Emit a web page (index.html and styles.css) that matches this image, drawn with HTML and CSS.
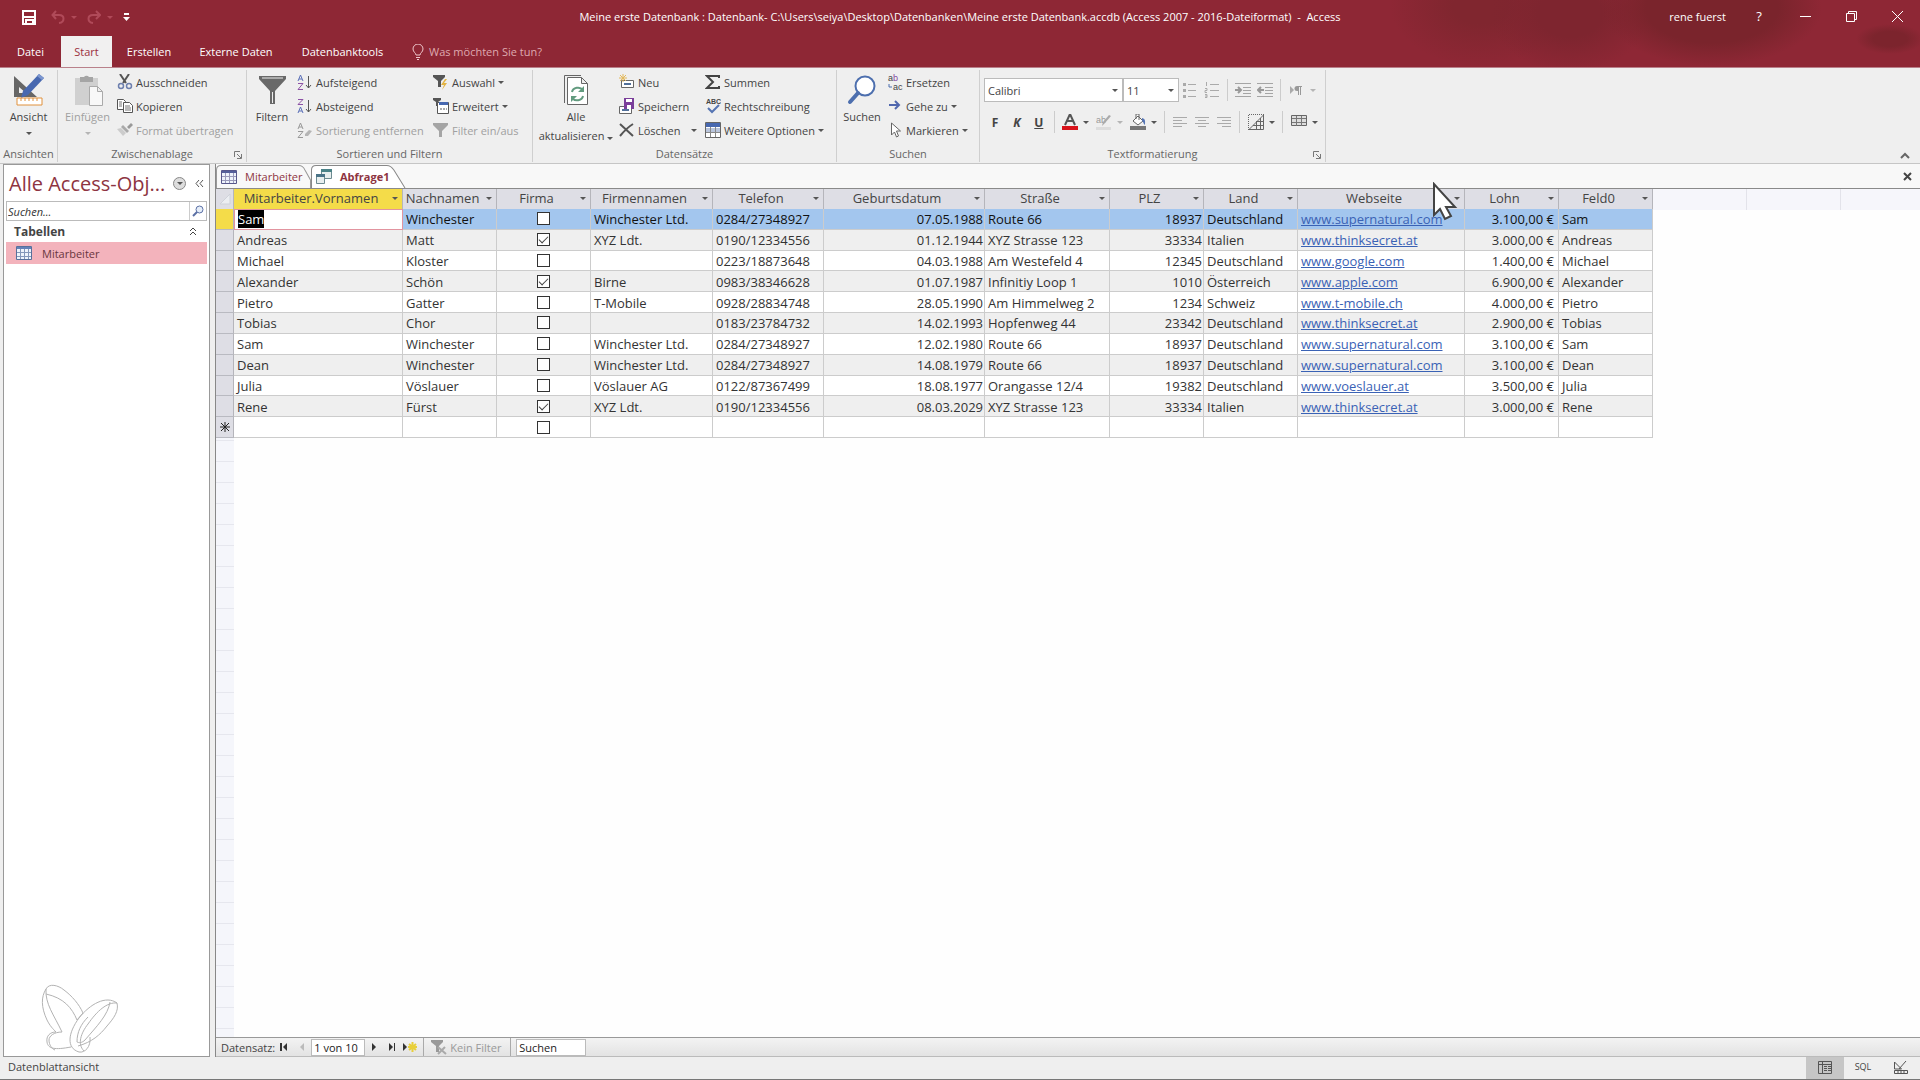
FILE: index.html
```html
<!DOCTYPE html>
<html lang="de">
<head>
  <meta charset="UTF-8" />
  <meta name="viewport" content="width=device-width, initial-scale=1.0" />
  <title>Meine erste Datenbank - Access</title>
  <link rel="stylesheet" href="styles.css">
</head>
<body>
  <div class="app">
    <header class="top">
      <div class="titlebar">
        <div class="quick">
          <button class="quick-btn save" aria-label="Speichern"><svg width="14" height="15" viewBox="0 0 14 15"><path d="M1 1h12v13H1z" fill="none" stroke="#fff" stroke-width="2"/><path d="M1 7h12M4 10h7v4H4z" fill="none" stroke="#fff" stroke-width="2"/></svg></button>
          <button class="quick-btn dim" aria-label="Rückgängig"><svg width="14" height="14" viewBox="0 0 14 14"><path d="M5 1 1.500 5 5 9M2 5h6c6 0 6 7 0 8" fill="none" stroke="#b04a59" stroke-width="2"/></svg><i class="caret"></i></button>
          <button class="quick-btn dim" aria-label="Wiederholen"><svg width="14" height="14" viewBox="0 0 14 14"><path d="M9 1l4 4-4 4M12 5H6c-6 0-6 7 0 8" fill="none" stroke="#b04a59" stroke-width="2"/></svg><i class="caret"></i></button>
          <button class="quick-btn" aria-label="Anpassen"><svg width="7" height="8" viewBox="0 0 7 8"><path d="M1 0h5v2H1zM0 4h7L3.500 8z" fill="#fff"/></svg></button>
        </div>
        <h1 class="title">Meine erste Datenbank : Datenbank- C:\Users\seiya\Desktop\Datenbanken\Meine erste Datenbank.accdb (Access 2007 - 2016-Dateiformat)&nbsp; -&nbsp; Access</h1>
        <div class="window">
          <span class="user">rene fuerst</span>
          <button class="win-btn help">?</button>
          <button class="win-btn" aria-label="Minimieren"><svg width="11" height="11"><path d="M0 5h11v1H0z" fill="#fff"/></svg></button>
          <button class="win-btn" aria-label="Wiederherstellen"><svg width="11" height="11" viewBox="0 0 11 11"><path d="M.5 2.500h8v8h-8zM2.500 2V.5h8v8H9" fill="none" stroke="#fff"/></svg></button>
          <button class="win-btn" aria-label="Schließen"><svg width="11" height="11" viewBox="0 0 11 11"><path d="M0 0l11 11M11 0L0 11" stroke="#fff"/></svg></button>
        </div>
      </div>
      <nav class="tabs">
        <button class="tab tab-file">Datei</button>
        <button class="tab tab-start active">Start</button>
        <button class="tab tab-create">Erstellen</button>
        <button class="tab tab-external">Externe Daten</button>
        <button class="tab tab-tools">Datenbanktools</button>
        <button class="tell-me"><svg width="12" height="16" viewBox="0 0 12 16"><path d="M4 11C4 9 1 8 1 5a5 5 0 0 1 10 0c0 3-3 4-3 6zM4 13.500h4M5 15.500h2" fill="none" stroke="#efc9ce"/></svg>Was möchten Sie tun?</button>
      </nav>
    </header>

    <section class="ribbon">
      <div class="group g-view">
        <div class="group-body">
          <button class="big"><svg width="32" height="32" viewBox="0 0 32 32"><path d="M1 2l23 21H1zM6 13v6h7z" fill="#666" fill-rule="evenodd"/><path d="M26 0l5 4-16 17-7 3 2-7z" fill="#4768b0"/><path d="M26 0l5 4-2 2-5-4z" fill="#7d97cf"/><path d="M4 24h25v7H4z" fill="#fff" stroke="#e0913c"/><path d="M8 24v3M12 24v3M16 24v3M20 24v3M24 24v3" stroke="#e0913c"/></svg><span>Ansicht</span><i class="caret"></i></button>
        </div>
        <div class="group-label">Ansichten</div>
      </div>

      <div class="group g-clip">
        <div class="group-body">
          <button class="big dim"><svg width="32" height="32" viewBox="0 0 32 32"><path d="M3 4h23v27H3z" fill="#d0d0d0"/><path d="M8 3h4a3 3 0 0 1 5 0h4v5H8z" fill="#a5a5a5"/><path d="M17.500 12.500h8l5 5v14h-13zM25.500 12.500v5h5" fill="#f8f8f8" stroke="#aaa"/></svg><span>Einfügen</span><i class="caret"></i></button>
          <div class="stack">
            <button class="small"><svg width="16" height="16" viewBox="0 0 16 16"><path d="M3 0l6 9M12 0L6 9" stroke="#555" stroke-width="2"/><circle cx="4" cy="12" r="2.500" fill="none" stroke="#6d7fae" stroke-width="1.500"/><circle cx="12" cy="12" r="2.500" fill="none" stroke="#6d7fae" stroke-width="1.500"/></svg>Ausschneiden</button>
            <button class="small"><svg width="16" height="16" viewBox="0 0 16 16"><path d="M.5 1.500h6l2 2v8h-8z" fill="#fff" stroke="#555"/><path d="M2 4h3M2 6h3M2 8h3" stroke="#777"/><path d="M6.500 4.500h6l3 3v7h-9z" fill="#fff" stroke="#555"/><path d="M8 8h5M8 10h6M8 12h6" stroke="#777"/></svg>Kopieren</button>
            <button class="small dim"><svg width="16" height="16" viewBox="0 0 16 16"><path d="M10 5l4-4 2 2-4 4z" fill="#999"/><path d="M6 3l6 6-2 2-6-6z" fill="#aaa"/><path d="M4 6l5 5-3 3-6-7z" fill="#ccc"/></svg>Format übertragen</button>
          </div>
        </div>
        <div class="group-label">Zwischenablage</div>
        <button class="launcher" aria-label="Zwischenablage öffnen"><svg width="8" height="8" viewBox="0 0 8 8"><path d="M.5 6V.5H6M3 3l4 4M7.500 3v4.500H3" fill="none" stroke="#777"/></svg></button>
      </div>

      <div class="group g-sort">
        <div class="group-body">
          <button class="big"><svg width="32" height="32" viewBox="0 0 32 32"><path d="M3 2h27v3L19 17v13h-5V17L3 5z" fill="#696969"/><path d="M6 4h21M16.500 18v11" stroke="#eee"/></svg><span>Filtern</span></button>
          <div class="stack">
            <button class="small"><svg width="16" height="16" viewBox="0 0 16 16"><path d="M1 7l2.500-6L6 7M2 5h3" fill="none" stroke="#5b70b8"/><path d="M1 9.500h5l-5 6h5" fill="none" stroke="#8c51a5"/><path d="M11.500 2v12M9 11l2.500 3 2.500-3" fill="none" stroke="#555"/></svg>Aufsteigend</button>
            <button class="small"><svg width="16" height="16" viewBox="0 0 16 16"><path d="M1 1.500h5l-5 5h5" fill="none" stroke="#8c51a5"/><path d="M1 15l2.500-6L6 15M2 13h3" fill="none" stroke="#5b70b8"/><path d="M11.500 2v12M9 11l2.500 3 2.500-3" fill="none" stroke="#555"/></svg>Absteigend</button>
            <button class="small dim"><svg width="16" height="16" viewBox="0 0 16 16"><path d="M1 7l2.500-6L6 7M2 5h3M1 9.500h5l-5 6h5" fill="none" stroke="#999"/><path d="M8 12l4-4 3 1-4 5H8z" fill="#b5b5b5"/></svg>Sortierung entfernen</button>
          </div>
          <div class="stack">
            <button class="small"><svg width="16" height="16" viewBox="0 0 16 16"><path d="M0 1h12v2L8 7v6H5V7L0 3z" fill="#555"/><path d="M12 5l-4 6h3l-2 5 5-7h-3l3-4z" fill="#e3b341"/></svg>Auswahl<i class="caret"></i></button>
            <button class="small"><svg width="16" height="16" viewBox="0 0 16 16"><path d="M0 0h8v2L5 4v4H3V4L0 2z" fill="#555"/><path d="M4.500 4.500h11v11h-11z" fill="#fff" stroke="#555"/><path d="M6 4h9v3H6z" fill="#4768b0"/><path d="M7 11h2M10 11h2M13 11h1" stroke="#555"/></svg>Erweitert<i class="caret"></i></button>
            <button class="small dim"><svg width="16" height="16" viewBox="0 0 16 16"><path d="M0 1h15v2L9 9v6H6V9L0 3z" fill="#a5a5a5"/></svg>Filter ein/aus</button>
          </div>
        </div>
        <div class="group-label">Sortieren und Filtern</div>
      </div>

      <div class="group g-records">
        <div class="group-body">
          <button class="big"><svg width="32" height="32" viewBox="0 0 32 32"><path d="M4.500 29V1.500H21" fill="none" stroke="#666"/><path d="M7.500 3.500h14l6 6v21h-20zM21.500 3.500v6h6" fill="#fff" stroke="#666"/><path d="M12 18a6 5 0 0 1 11-2M23 22a6 5 0 0 1-11 2" fill="none" stroke="#629b7f" stroke-width="2"/><path d="M24 12v6h-6zM11 28v-6h6z" fill="#629b7f"/></svg><span>Alle</span><span>aktualisieren <i class="caret"></i></span></button>
          <div class="stack">
            <button class="small"><svg width="16" height="16" viewBox="0 0 16 16"><path d="M2.500 6.500h12v7h-12z" fill="#fff" stroke="#666"/><path d="M5 9h7v2H5z" fill="#51709a"/><path d="M4 0v8M0 4h8M1 1l6 6M7 1L1 7" stroke="#e3b95c"/></svg>Neu</button>
            <button class="small"><svg width="16" height="16" viewBox="0 0 16 16"><path d="M.5 8.500h12v7H.5z" fill="#fff" stroke="#666"/><path d="M3 11h7v2H3z" fill="#51709a"/><path d="M5 0h10v11H5z" fill="#7a3e9a"/><path d="M7 1h6v3H7zM8 7h4v4H8z" fill="#fff"/></svg>Speichern</button>
            <button class="small"><svg width="16" height="16" viewBox="0 0 16 16"><path d="M1 2l13 12M14 2C9 5 6 8 1 14" fill="none" stroke="#555" stroke-width="2"/></svg>Löschen<i class="caret far"></i></button>
          </div>
          <div class="stack">
            <button class="small"><svg width="16" height="16" viewBox="0 0 16 16"><path d="M14 4V2H2l6 6-6 6h12v-2" fill="none" stroke="#444" stroke-width="2"/></svg>Summen</button>
            <button class="small"><svg width="16" height="18" viewBox="0 0 16 18"><text class="glyph glyph-bold" x="1" y="7">ABC</text><path d="M3 11l4 4 7-7" fill="none" stroke="#5574b3" stroke-width="2"/></svg>Rechtschreibung</button>
            <button class="small"><svg width="16" height="16" viewBox="0 0 16 16"><path d="M.5.5h15v15H.5z" fill="#fff" stroke="#666"/><path d="M1 1h14v4H1z" fill="#4768b0"/><path d="M1 6h14v4H1z" fill="#b9c5dc"/><path d="M1 10.500h14M5.500 5v10M10.500 5v10" stroke="#888"/></svg>Weitere Optionen<i class="caret"></i></button>
          </div>
        </div>
        <div class="group-label">Datensätze</div>
      </div>

      <div class="group g-find">
        <div class="group-body">
          <button class="big"><svg width="32" height="32" viewBox="0 0 32 32"><circle cx="19" cy="12" r="9.500" fill="#fff" stroke="#4d6fae" stroke-width="2"/><path d="M12 19L4 28" stroke="#4d6fae" stroke-width="4" stroke-linecap="round"/></svg><span>Suchen</span></button>
          <div class="stack">
            <button class="small"><svg width="16" height="20" viewBox="0 0 16 20"><text class="glyph" x="1" y="9">a<tspan fill="#8548a0">b</tspan></text><text class="glyph" x="6" y="18">ac</text><path d="M2 12v3h3" fill="none" stroke="#4d6fae"/></svg>Ersetzen</button>
            <button class="small"><svg width="16" height="16" viewBox="0 0 16 16"><path d="M2 7h10M8 3l4 4-4 4" fill="none" stroke="#5067ae" stroke-width="2"/></svg>Gehe zu<i class="caret"></i></button>
            <button class="small"><svg width="16" height="16" viewBox="0 0 16 16"><path d="M4.500 1v12l3-3 2 5 2-1-2-5h4z" fill="#fff" stroke="#666"/></svg>Markieren<i class="caret"></i></button>
          </div>
        </div>
        <div class="group-label">Suchen</div>
      </div>

      <div class="group g-text">
        <div class="format">
          <div class="format-row">
            <span class="pick pick-font"><select aria-label="Schriftart"><option>Calibri</option></select><i class="caret"></i></span>
            <span class="pick pick-size"><select aria-label="Schriftgrad"><option>11</option></select><i class="caret"></i></span>
            <button class="tool" aria-label="Aufzählung"><svg width="16" height="16" viewBox="0 0 16 16"><path d="M1 1h3v3H1zM1 7h3v3H1zM1 13h3v3H1z" fill="#aaa"/><path d="M6 2.500h8M6 8.500h8M6 14.500h8" stroke="#aaa"/></svg></button>
            <button class="tool" aria-label="Nummerierung"><svg width="16" height="16" viewBox="0 0 16 16"><path d="M2.500 0v4M1 6.500h2v2H1v2h2M1 12.500h2v3H1M1 14h2M6 2.500h9M6 8.500h9M6 14.500h9" fill="none" stroke="#aaa"/></svg></button>
            <span class="sep"></span>
            <button class="tool" aria-label="Einzug vergrößern"><svg width="16" height="16" viewBox="0 0 16 16"><path d="M0 1.500h16M8 5.500h8M8 8.500h8M8 11.500h8M0 14.500h16" stroke="#a5a5a5"/><path d="M0 8h6M3 5l3 3-3 3" fill="none" stroke="#999" stroke-width="2"/></svg></button>
            <button class="tool" aria-label="Einzug verkleinern"><svg width="16" height="16" viewBox="0 0 16 16"><path d="M0 1.500h16M8 5.500h8M8 8.500h8M8 11.500h8M0 14.500h16" stroke="#a5a5a5"/><path d="M1 8h6M4 5L1 8l3 3" fill="none" stroke="#999" stroke-width="2"/></svg></button>
            <span class="sep"></span>
            <button class="tool split dim" aria-label="Textrichtung"><svg width="16" height="16" viewBox="0 0 16 16"><path d="M1 4l4 4-4 4z" fill="#aaa"/><path d="M10 4H8a2 2 0 0 0 0 5h2z" fill="#999"/><path d="M8 4.500h5M9.500 4v9M11.500 4v9" fill="none" stroke="#999"/></svg><i class="caret"></i></button>
          </div>
          <div class="format-row">
            <button class="tool letter">F</button>
            <button class="tool letter italic">K</button>
            <button class="tool letter under">U</button>
            <span class="sep"></span>
            <button class="tool split" aria-label="Schriftfarbe"><svg width="16" height="16" viewBox="0 0 16 16"><path d="M3 11L8 0l5 11M5 7h6" fill="none" stroke="#555" stroke-width="2"/><path d="M0 12h16v4H0z" fill="#d8131b"/></svg><i class="caret"></i></button>
            <button class="tool split dim" aria-label="Texthervorhebung"><svg width="16" height="16" viewBox="0 0 16 16"><text class="glyph glyph-dim" x="0" y="9">ab</text><path d="M15 2L9 9l-3 3 1-4 6-7" fill="#aaa"/><path d="M0 13h15v3H0z" fill="#ddd"/></svg><i class="caret"></i></button>
            <button class="tool split" aria-label="Hintergrundfarbe"><svg width="16" height="16" viewBox="0 0 16 16"><path d="M8 2l5 5-5 4-5-4zM6 5V0h3v6" fill="#fff" stroke="#666"/><path d="M12 4c4 1 3 4 3 7-2-1-1-3-3-4z" fill="#5574b3"/><path d="M0 12h16v4H0z" fill="#777"/></svg><i class="caret"></i></button>
            <span class="sep"></span>
            <button class="tool" aria-label="Linksbündig"><svg width="16" height="16" viewBox="0 0 16 16"><path d="M1 3.500h14M1 6.500h9M1 9.500h14M1 12.500h9" stroke="#aaa"/></svg></button>
            <button class="tool" aria-label="Zentriert"><svg width="16" height="16" viewBox="0 0 16 16"><path d="M1 3.500h14M4 6.500h8M1 9.500h14M4 12.500h8" stroke="#aaa"/></svg></button>
            <button class="tool" aria-label="Rechtsbündig"><svg width="16" height="16" viewBox="0 0 16 16"><path d="M1 3.500h14M6 6.500h9M1 9.500h14M6 12.500h9" stroke="#aaa"/></svg></button>
            <span class="sep"></span>
            <button class="tool split" aria-label="Gitternetzlinien"><svg width="16" height="16" viewBox="0 0 16 16"><path d="M.5 16V.5H16" fill="none" stroke="#666" stroke-dasharray="1 1"/><path d="M15.500 1v14.500H1zM5 11.500h11M8 7.500h8M8.500 8v8M12.500 4v12" fill="none" stroke="#666"/></svg><i class="caret"></i></button>
            <span class="sep"></span>
            <button class="tool split" aria-label="Alternative Zeilenfarbe"><svg width="16" height="16" viewBox="0 0 16 16"><path d="M.5 1.500h15v10H.5z" fill="#ddd" stroke="#666"/><path d="M1 4.500h14M1 8.500h14M5.500 2v10M10.500 2v10" stroke="#777"/></svg><i class="caret"></i></button>
          </div>
        </div>
        <div class="group-label">Textformatierung</div>
        <button class="launcher" aria-label="Textformatierung öffnen"><svg width="8" height="8" viewBox="0 0 8 8"><path d="M.5 6V.5H6M3 3l4 4M7.500 3v4.500H3" fill="none" stroke="#777"/></svg></button>
      </div>
      <button class="collapse" aria-label="Menüband reduzieren"><svg width="10" height="7" viewBox="0 0 10 7"><path d="M1 6l4-4 4 4" fill="none" stroke="#666" stroke-width="2"/></svg></button>
    </section>

    <div class="work">
      <aside class="nav">
        <div class="nav-head">
          <h2>Alle Access-Obj...</h2>
          <button class="round" aria-label="Objekttyp"><i class="caret"></i></button>
          <button class="shutter" aria-label="Navigationsbereich schließen"><svg width="9" height="9" viewBox="0 0 9 9"><path d="M4 1L1 4.500 4 8M8 1L5 4.500 8 8" fill="none" stroke="#555"/></svg></button>
        </div>
        <div class="nav-search">
          <input type="text" placeholder="Suchen..." aria-label="Objekte suchen">
          <button aria-label="Suchen"><svg width="12" height="12" viewBox="0 0 12 12"><circle cx="7.500" cy="4.500" r="3.500" fill="#e6eef9" stroke="#5b70a5"/><path d="M5 7l-4 4" stroke="#5b70a5" stroke-width="2"/></svg></button>
        </div>
        <button class="nav-group">Tabellen<svg width="8" height="9" viewBox="0 0 8 9"><path d="M1 4l3-3 3 3M1 8l3-3 3 3" fill="none" stroke="#444"/></svg></button>
        <a class="nav-item" href="#"><svg width="16" height="14" viewBox="0 0 16 14"><path d="M.5.500h15v13H.5z" fill="#eef3fb" stroke="#57709b"/><path d="M1 1h14v2H1z" fill="#6481b8"/><path d="M1 6.500h14M1 10.500h14M4.500 3v10M8.500 3v10M12.500 3v10" stroke="#8497ba"/></svg>Mitarbeiter</a>
        <svg class="butterfly" width="78" height="70" viewBox="0 0 78 70" fill="none" stroke="#b3b3b3"><path d="M6 6c3-6 12-4 18 1 8 6 15 14 19 23l-6 7C32 25 24 15 6 11"/><path d="M6 6C1 14 1 24 7 37c3 6 6 9 9 12M6 6c-1 15 8 26 16 43-8 0-13 4-13 8"/><path d="M16 49c-6 0-10 4-9 10 1 7 8 8 24 5M9 57c0 5 3 9 6 10"/><path d="M77 20C66 12 50 21 39 35 28 50 26 65 39 69c6 1 12-5 11-15M77 20c2 8-3 15-10 23-7 9-15 16-29 20M77 20c-10-1-20 8-29 21-7 9-11 20-4 27"/><path d="M70 19c-2 13-13 24-25 38-3 3-6 3-8 2 0-10 4-18 11-25"/></svg>
      </aside>

      <main class="doc">
        <div class="doc-tabs">
          <button class="doc-tab"><svg class="edge" viewBox="0 0 94 23" preserveAspectRatio="none"><path d="M.5 23V5Q.5.500 5 .5H82Q86 .5 88 5L93.500 15V23" fill="#f8f8f8" stroke="#999"/></svg><svg width="16" height="14" viewBox="0 0 16 14"><path d="M.5.500h15v13H.5z" fill="#eef3fb" stroke="#57578b"/><path d="M1 1h14v2H1z" fill="#55609a"/><path d="M1 6.500h14M1 10.500h14M4.500 3v10M8.500 3v10M12.500 3v10" stroke="#9a9aba"/></svg>Mitarbeiter</button>
          <button class="doc-tab current"><svg class="edge" viewBox="0 0 94 23" preserveAspectRatio="none"><path d="M.5 23V5Q.5.500 5 .5H75Q79 .5 82 5L93 23" fill="#fff" stroke="#888"/></svg><svg width="16" height="16" viewBox="0 0 16 16"><path d="M5.500.500h10v9h-10z" fill="#e8eeee" stroke="#6d8a90"/><path d="M5 0h11v3H5z" fill="#4a8287"/><path d="M.5 5.500h8v9h-8z" fill="#e8eeee" stroke="#6d8a90"/><path d="M0 5h9v3H0z" fill="#4a7387"/></svg>Abfrage1</button>
          <button class="doc-close" aria-label="Schließen"><svg width="9" height="9" viewBox="0 0 9 9"><path d="M1 1l7 7M8 1L1 8" stroke="#444" stroke-width="2"/></svg></button>
        </div>

        <div class="sheet">
          <div class="sheet-head-rest"><span></span><span></span></div>
          <table class="grid">
            <colgroup>
              <col class="c-sel"><col class="c-first"><col class="c-std"><col class="c-std"><col class="c-company"><col class="c-phone"><col class="c-birth"><col class="c-street"><col class="c-std"><col class="c-std"><col class="c-web"><col class="c-std"><col class="c-std">
            </colgroup>
            <thead>
              <tr>
                <th class="corner"><svg width="12" height="12" viewBox="0 0 12 12"><path d="M11 1v10H1z" fill="#eceef2" stroke="#cfd2da"/></svg></th>
                <th class="sorted"><div>Mitarbeiter.Vornamen<i class="caret"></i></div></th>
                <th><div>Nachnamen<i class="caret"></i></div></th>
                <th><div>Firma<i class="caret"></i></div></th>
                <th><div>Firmennamen<i class="caret"></i></div></th>
                <th><div>Telefon<i class="caret"></i></div></th>
                <th><div>Geburtsdatum<i class="caret"></i></div></th>
                <th><div>Straße<i class="caret"></i></div></th>
                <th><div>PLZ<i class="caret"></i></div></th>
                <th><div>Land<i class="caret"></i></div></th>
                <th><div>Webseite<i class="caret"></i></div></th>
                <th><div>Lohn<i class="caret"></i></div></th>
                <th><div>Feld0<i class="caret"></i></div></th>
              </tr>
            </thead>
            <tbody>
              <tr class="current-row"><th></th><td class="editing"><span>Sam</span></td><td>Winchester</td><td class="check"><input type="checkbox" aria-label="Firma"></td><td>Winchester Ltd.</td><td>0284/27348927</td><td class="num">07.05.1988</td><td>Route 66</td><td class="num">18937</td><td>Deutschland</td><td><a href="#">www.supernatural.com</a></td><td class="num money">3.100,00 €</td><td>Sam</td></tr>
              <tr><th></th><td>Andreas</td><td>Matt</td><td class="check"><input type="checkbox" aria-label="Firma" checked></td><td>XYZ Ldt.</td><td>0190/12334556</td><td class="num">01.12.1944</td><td>XYZ Strasse 123</td><td class="num">33334</td><td>Italien</td><td><a href="#">www.thinksecret.at</a></td><td class="num money">3.000,00 €</td><td>Andreas</td></tr>
              <tr><th></th><td>Michael</td><td>Kloster</td><td class="check"><input type="checkbox" aria-label="Firma"></td><td></td><td>0223/18873648</td><td class="num">04.03.1988</td><td>Am Westefeld 4</td><td class="num">12345</td><td>Deutschland</td><td><a href="#">www.google.com</a></td><td class="num money">1.400,00 €</td><td>Michael</td></tr>
              <tr><th></th><td>Alexander</td><td>Schön</td><td class="check"><input type="checkbox" aria-label="Firma" checked></td><td>Birne</td><td>0983/38346628</td><td class="num">01.07.1987</td><td>Infinitiy Loop 1</td><td class="num">1010</td><td>Österreich</td><td><a href="#">www.apple.com</a></td><td class="num money">6.900,00 €</td><td>Alexander</td></tr>
              <tr><th></th><td>Pietro</td><td>Gatter</td><td class="check"><input type="checkbox" aria-label="Firma"></td><td>T-Mobile</td><td>0928/28834748</td><td class="num">28.05.1990</td><td>Am Himmelweg 2</td><td class="num">1234</td><td>Schweiz</td><td><a href="#">www.t-mobile.ch</a></td><td class="num money">4.000,00 €</td><td>Pietro</td></tr>
              <tr><th></th><td>Tobias</td><td>Chor</td><td class="check"><input type="checkbox" aria-label="Firma"></td><td></td><td>0183/23784732</td><td class="num">14.02.1993</td><td>Hopfenweg 44</td><td class="num">23342</td><td>Deutschland</td><td><a href="#">www.thinksecret.at</a></td><td class="num money">2.900,00 €</td><td>Tobias</td></tr>
              <tr><th></th><td>Sam</td><td>Winchester</td><td class="check"><input type="checkbox" aria-label="Firma"></td><td>Winchester Ltd.</td><td>0284/27348927</td><td class="num">12.02.1980</td><td>Route 66</td><td class="num">18937</td><td>Deutschland</td><td><a href="#">www.supernatural.com</a></td><td class="num money">3.100,00 €</td><td>Sam</td></tr>
              <tr><th></th><td>Dean</td><td>Winchester</td><td class="check"><input type="checkbox" aria-label="Firma"></td><td>Winchester Ltd.</td><td>0284/27348927</td><td class="num">14.08.1979</td><td>Route 66</td><td class="num">18937</td><td>Deutschland</td><td><a href="#">www.supernatural.com</a></td><td class="num money">3.100,00 €</td><td>Dean</td></tr>
              <tr><th></th><td>Julia</td><td>Vöslauer</td><td class="check"><input type="checkbox" aria-label="Firma"></td><td>Vöslauer AG</td><td>0122/87367499</td><td class="num">18.08.1977</td><td>Orangasse 12/4</td><td class="num">19382</td><td>Deutschland</td><td><a href="#">www.voeslauer.at</a></td><td class="num money">3.500,00 €</td><td>Julia</td></tr>
              <tr><th></th><td>Rene</td><td>Fürst</td><td class="check"><input type="checkbox" aria-label="Firma" checked></td><td>XYZ Ldt.</td><td>0190/12334556</td><td class="num">08.03.2029</td><td>XYZ Strasse 123</td><td class="num">33334</td><td>Italien</td><td><a href="#">www.thinksecret.at</a></td><td class="num money">3.000,00 €</td><td>Rene</td></tr>
              <tr><th><svg width="10" height="10" viewBox="0 0 10 10"><path d="M5 0v10M0 5h10M1 1l8 8M9 1L1 9" stroke="#222"/></svg></th><td></td><td></td><td class="check"><input type="checkbox" aria-label="Firma"></td><td></td><td></td><td></td><td></td><td></td><td></td><td></td><td></td><td></td></tr>
            </tbody>
          </table>
        </div>

        <div class="recordbar">
          <label for="record">Datensatz:</label>
          <button class="rec" aria-label="Erster"><svg width="8" height="8" viewBox="0 0 8 8"><path d="M0 0h2v8H0zM7 0v8L3 4z" fill="#333"/></svg></button>
          <button class="rec" aria-label="Vorheriger"><svg width="8" height="8" viewBox="0 0 8 8"><path d="M6 0v8L2 4z" fill="#bbb"/></svg></button>
          <input id="record" class="rec-no" type="text" value="1 von 10">
          <button class="rec" aria-label="Nächster"><svg width="8" height="8" viewBox="0 0 8 8"><path d="M2 0v8l4-4z" fill="#333"/></svg></button>
          <button class="rec" aria-label="Letzter"><svg width="8" height="8" viewBox="0 0 8 8"><path d="M1 0v8l4-4zM6 0h1v8H6z" fill="#333"/></svg></button>
          <button class="rec" aria-label="Neuer Datensatz"><svg width="14" height="10" viewBox="0 0 14 10"><path d="M0 1v8l4-4z" fill="#333"/><path d="M9.500 0v10M5 5h9M6 2l7 6M13 2L6 8" stroke="#e8cf3a" stroke-width="2"/></svg></button>
          <button class="filter"><svg width="16" height="16" viewBox="0 0 16 16"><path d="M0 1h12v2L8 7v6H5V7L0 3z" fill="#999"/><path d="M7 8l8 7M14 8l-7 7" stroke="#aaa" stroke-width="2"/></svg>Kein Filter</button>
          <input class="rec-search" type="text" value="Suchen" aria-label="Suchen">
        </div>
        <svg class="pointer" width="26" height="40" viewBox="0 0 26 40"><path d="M2 2v31l6-6 5 10 6-3-5-9h9z" fill="#fff" stroke="#444" stroke-width="2"/></svg>
      </main>
    </div>

    <footer class="status">
      <span>Datenblattansicht</span>
      <div class="views">
        <button class="view on" aria-label="Datenblattansicht"><svg width="14" height="13" viewBox="0 0 14 13"><path d="M.5.500h13v12H.5zM1 3.500h13M4.500 1v12" fill="none" stroke="#555"/><path d="M6 5.500h3M10 5.500h3M6 7.500h3M10 7.500h3M6 9.500h3M10 9.500h3" stroke="#555"/></svg></button>
        <button class="view">SQL</button>
        <button class="view" aria-label="Entwurfsansicht"><svg width="14" height="13" viewBox="0 0 14 13"><path d="M.5 1l7 7h-7zM12 0L5 8M.5 9.500h13v3H.5zM4 10v2M7 10v2M10 10v2" fill="none" stroke="#555"/></svg></button>
      </div>
    </footer>
  </div>
</body>
</html>
```
FILE: styles.css
```css
* {
  box-sizing: border-box;
}

body {
  margin: 0;
  font-family: "Open Sans", "Noto Sans", sans-serif;
  font-size: 11px;
  color: #444;
  background-color: #efefef;
}

button,
input,
select {
  font: inherit;
  color: inherit;
  margin: 0;
  padding: 0;
  border: none;
  background: none;
}

button {
  display: flex;
  align-items: center;
}

h1,
h2 {
  margin: 0;
  font-weight: normal;
}

svg {
  flex: none;
}

.app {
  display: flex;
  flex-direction: column;
  min-height: 100vh;
  border-bottom: 1px solid #777;
}

.caret {
  display: inline-block;
  flex: none;
  border: 3px solid transparent;
  border-top: 3px solid #555;
  border-bottom: none;
}

.dim {
  color: #a0a0a0;
}

.dim .caret {
  border-top-color: #b5b5b5;
}

.glyph {
  font-family: "Liberation Sans", sans-serif;
  font-size: 9px;
  fill: #444;
}

.glyph-bold {
  font-size: 7px;
  font-weight: bold;
}

.glyph-dim {
  fill: #999;
}

/* title bar and ribbon tabs */
.top {
  color: #fff;
  background-color: #8e2735;
  background-image:
    radial-gradient(ellipse 34px 15px at calc(100% - 30px) 39px, #7c242d 50%, transparent),
    radial-gradient(ellipse 110px 58px at calc(100% - 208px) 8px, #7a242c 60%, transparent),
    radial-gradient(ellipse 80px 58px at calc(100% - 350px) 14px, #7e252f 40%, transparent),
    radial-gradient(ellipse 90px 60px at calc(100% - 440px) 6px, #80262f 30%, transparent);
  border-bottom: 1px solid #b9808a;
}

.titlebar {
  display: grid;
  grid-template-columns: 1fr auto 1fr;
  align-items: center;
  height: 36px;
  padding-bottom: 4px;
}

.quick {
  display: flex;
  align-items: center;
  gap: 10px;
  padding: 2px 0 0 22px;
}

.quick-btn {
  gap: 6px;
}

.quick .dim .caret {
  border-top-color: #b04a59;
}

.save {
  margin-right: 5px;
}

.title {
  font-size: 11px;
}

.window {
  display: flex;
  align-items: center;
  justify-content: flex-end;
}

.user {
  margin-right: 10px;
}

.win-btn {
  justify-content: center;
  width: 46px;
  height: 32px;
}

.help {
  font-size: 13px;
}

.tabs {
  display: flex;
  height: 31px;
}

.tab {
  justify-content: center;
}

.tab-file {
  width: 61px;
}

.tab-start {
  width: 51px;
}

.tab-create {
  width: 74px;
}

.tab-external {
  width: 100px;
}

.tab-tools {
  width: 113px;
}

.active {
  background-color: #f1f0f0;
  color: #9b2f3d;
}

.tell-me {
  gap: 5px;
  padding-left: 13px;
  color: #dfaab0;
}

/* ribbon */
.ribbon {
  display: flex;
  height: 96px;
  padding: 2px 0 1px;
  border-bottom: 1px solid #c6c6c6;
}

.group {
  position: relative;
  display: flex;
  flex-direction: column;
  border-right: 1px solid #cfcfcf;
}

.g-view {
  width: 58px;
}

.g-clip {
  width: 189px;
}

.g-sort {
  width: 286px;
}

.g-records {
  width: 304px;
}

.g-find {
  width: 143px;
}

.g-text {
  width: 346px;
}

.group-body {
  display: grid;
  flex: 1;
  align-items: start;
}

.g-clip .group-body {
  grid-template-columns: 59px 1fr;
}

.g-sort .group-body {
  grid-template-columns: 50px 136px 1fr;
}

.g-records .group-body {
  grid-template-columns: 86px 86px 1fr;
}

.g-find .group-body {
  grid-template-columns: 50px 1fr;
}

.group-label {
  text-align: center;
  line-height: 16px;
  color: #666;
}

.big {
  flex-direction: column;
  width: 100%;
  padding-top: 4px;
  line-height: 16px;
  white-space: nowrap;
}

.big span {
  padding-top: 3px;
}

.big > .caret {
  margin-top: 7px;
}

.stack {
  display: grid;
  grid-auto-rows: 24px;
}

.small {
  gap: 3px;
  white-space: nowrap;
}

.small .far {
  margin-left: 7px;
}

.launcher {
  position: absolute;
  right: 4px;
  bottom: 3px;
}

.format {
  display: flex;
  flex: 1;
  flex-direction: column;
  gap: 8px;
  padding: 8px 4px 0;
}

.format-row {
  display: flex;
  align-items: center;
  height: 24px;
}

.pick {
  display: flex;
  align-items: center;
  height: 24px;
  padding-right: 4px;
  background-color: #fff;
  border: 1px solid #bbb;
}

.pick select {
  flex: 1;
  padding-left: 3px;
  appearance: none;
}

.pick-font {
  width: 139px;
}

.pick-size {
  width: 56px;
}

.tool {
  justify-content: center;
  width: 22px;
  height: 22px;
}

.split {
  gap: 5px;
  width: 34px;
}

.letter {
  font-size: 12px;
  font-weight: bold;
}

.italic {
  font-style: italic;
}

.under {
  text-decoration: underline;
}

.sep {
  width: 1px;
  height: 22px;
  margin: 0 4px;
  background-color: #ccc;
}

.collapse {
  align-self: flex-end;
  margin-left: auto;
  padding: 0 10px 3px 0;
}

/* navigation pane */
.work {
  display: flex;
  flex: 1;
  padding-left: 3px;
}

.nav {
  display: flex;
  flex-direction: column;
  width: 207px;
  padding: 0 2px;
  background-color: #fff;
  border: 1px solid #999;
}

.nav-head {
  display: flex;
  align-items: center;
  height: 36px;
  padding: 0 3px;
}

.nav-head h2 {
  flex: 1;
  font-size: 20px;
  white-space: nowrap;
  color: #8e3441;
}

.round {
  justify-content: center;
  width: 13px;
  height: 13px;
  margin-right: 9px;
  background-color: #ddd;
  border: 1px solid #888;
  border-radius: 50%;
}

.nav-search {
  display: flex;
  height: 20px;
  border: 1px solid #bbb;
}

.nav-search input {
  flex: 1;
  min-width: 0;
  padding-left: 1px;
  font-style: italic;
}

.nav-search input::placeholder {
  color: #333;
}

.nav-search button {
  justify-content: center;
  width: 17px;
  border-left: 1px solid #ccc;
}

.nav-group {
  justify-content: space-between;
  height: 21px;
  padding: 0 10px 0 8px;
  font-size: 12px;
  font-weight: bold;
}

.nav-item {
  display: flex;
  align-items: center;
  gap: 10px;
  height: 22px;
  padding-left: 10px;
  color: #6a3640;
  text-decoration: none;
  background-color: #f3b3bc;
}

.butterfly {
  margin: auto 0 3px 34px;
}

/* document area */
.doc {
  position: relative;
  display: flex;
  flex: 1;
  flex-direction: column;
  margin-left: 5px;
  border-left: 1px solid #888;
  background-color: #fff;
}

.doc-tabs {
  display: flex;
  height: 25px;
  padding-top: 1px;
  background-color: #f8f8f8;
  border-bottom: 1px solid #8a8a8a;
}

.doc-tab {
  position: relative;
  isolation: isolate;
  gap: 8px;
  width: 95px;
  padding-left: 5px;
  color: #8e3441;
}

.doc-tab .edge {
  position: absolute;
  inset: 0;
  z-index: -1;
  width: 100%;
  height: 100%;
}

.current {
  font-weight: bold;
}

.doc-close {
  margin-left: auto;
  padding-right: 8px;
}

.sheet {
  position: relative;
  flex: 1;
  background: repeating-linear-gradient(#f5f6fb 0 20px, #e6e7ee 20px 21px) left / 18px 100% no-repeat #fefefe;
}

.sheet-head-rest {
  position: absolute;
  inset: 0 0 auto 1437px;
  display: flex;
  height: 21px;
  background-color: #f6f6fb;
}

.sheet-head-rest span {
  width: 94px;
  border-right: 1px solid #e3e3ea;
}

.grid {
  position: relative;
  width: 1437px;
  height: 249px;
  table-layout: fixed;
  border-collapse: separate;
  border-spacing: 0;
  font-size: 13px;
  line-height: 18px;
  white-space: nowrap;
  color: #333;
}

.c-sel {
  width: 18px;
}

.c-first {
  width: 169px;
}

.c-std {
  width: 94px;
}

.c-company {
  width: 122px;
}

.c-phone {
  width: 111px;
}

.c-birth {
  width: 161px;
}

.c-street {
  width: 125px;
}

.c-web {
  width: 167px;
}

.grid th {
  height: 20px;
  padding: 0;
  font-weight: normal;
  background-color: #dedee5;
  border-right: 1px solid #b5b5bb;
}

.grid tbody th {
  border-bottom: 1px solid #b9bac1;
}

.grid th div {
  display: grid;
  grid-template-columns: 1fr 14px;
  align-items: center;
  padding-bottom: 2px;
  text-align: center;
  color: #444;
}

.grid th .caret {
  justify-self: center;
}

.grid th svg {
  display: block;
  margin: 0 auto;
}

.grid .sorted {
  background-color: #f4dc49;
}

.grid td {
  padding: 1px 0 0 3px;
  overflow: hidden;
  background-color: #fff;
  border-right: 1px solid #ccc;
  border-bottom: 1px solid #ccc;
}

.grid tr:nth-child(even) td {
  background-color: #efefef;
}

.grid .num {
  padding: 1px 1px 0 0;
  text-align: right;
}

.grid .money {
  padding-right: 4px;
}

.grid .check {
  padding: 0;
  text-align: center;
}

.check input {
  display: block;
  width: 13px;
  height: 13px;
  margin: 0 auto;
  appearance: none;
  background-color: #fff;
  border: 1px solid #333;
}

.check input:checked::before {
  content: "";
  display: block;
  width: 8px;
  height: 4px;
  margin: 2px 0 0 1px;
  border: solid #444;
  border-width: 0 0 1px 1px;
  transform: rotate(-45deg);
}

.grid .current-row th {
  background-color: #f4dc49;
}

.grid .current-row td {
  color: #111;
  background-color: #a3c6ee;
}

.grid .current-row .editing {
  padding-top: 0;
  background-color: #fff;
  border: 1px solid #e2949f;
}

.grid .editing span {
  color: #fff;
  background-color: #000;
}

.grid a {
  color: #3a62b5;
}

.recordbar {
  display: flex;
  align-items: center;
  height: 20px;
  padding-left: 5px;
  border-top: 1px solid #999;
  border-bottom: 1px solid #bbb;
  background: linear-gradient(#f3f3f3, #e3e3e3);
}

.rec {
  justify-content: center;
  width: 18px;
}

.recordbar input {
  height: 17px;
  padding-left: 2px;
  color: #222;
  background-color: #fff;
  border: 1px solid #bbb;
}

.recordbar .rec-no {
  width: 54px;
}

.filter {
  gap: 3px;
  align-self: stretch;
  width: 88px;
  margin: 0 5px 0 4px;
  padding-left: 7px;
  color: #999;
  border: solid #aaa;
  border-width: 0 1px;
}

.recordbar .rec-search {
  width: 70px;
}

.pointer {
  position: absolute;
  top: 18px;
  left: 1216px;
}

.status {
  display: flex;
  align-items: center;
  justify-content: space-between;
  height: 22px;
  padding-left: 8px;
  line-height: 20px;
}

.status > span {
  align-self: flex-start;
}

.views {
  display: flex;
  align-self: stretch;
}

.view {
  justify-content: center;
  width: 38px;
  padding-bottom: 2px;
  font-size: 9px;
}

.on {
  background-color: #c6c6c6;
}
```
